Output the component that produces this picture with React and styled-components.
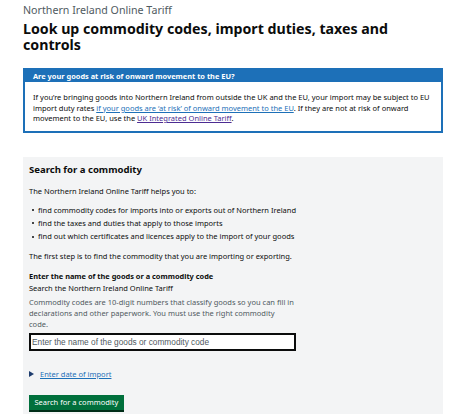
import React from 'react';
import styled, { createGlobalStyle } from 'styled-components';

const GlobalStyle = createGlobalStyle`
  html, body { margin: 0; padding: 0; background: #ffffff; }
  body {
    font-family: "Noto Sans", "Liberation Sans", Arial, sans-serif;
    color: #0b0c0c;
  }
  * { box-sizing: border-box; }
`;

const Page = styled.main`
  padding: 3px 31px 0 23px;
  display: flex;
  flex-direction: column;
`;

const Caption = styled.span`
  display: block;
  font-size: 10.66px;
  line-height: 14px;
  color: #505a5f;
`;

const Title = styled.h1`
  margin: 4px 0 0;
  max-width: 400px;
  font-size: 14.2px;
  line-height: 16px;
  font-weight: 700;
`;

const Banner = styled.section`
  margin-top: 15px;
  border: 2px solid #1d70b8;
  background: #ffffff;
`;

const BannerHeader = styled.div`
  background: #1d70b8;
  color: #ffffff;
  padding: 0 8px;
  font-size: 7.4px;
  line-height: 12px;
  font-weight: 700;
`;

const BannerBody = styled.p`
  margin: 0;
  padding: 10px 8px 7px;
  font-size: 7.5px;
  line-height: 10.6px;
`;

const Link = styled.a`
  color: ${p => (p.$visited ? '#4c2c92' : '#1d70b8')};
  text-decoration: underline;
  text-decoration-thickness: 0.6px;
  text-underline-offset: 1px;
`;

const Panel = styled.section`
  margin-top: 24px;
  background: #f3f4f5;
  padding: 7px 6px 4px;
  display: flex;
  flex-direction: column;
  align-items: flex-start;
`;

const PanelHeading = styled.h2`
  margin: 0;
  font-size: 9.55px;
  line-height: 12px;
  font-weight: 700;
`;

const Text = styled.p`
  margin: ${p => p.$top || 10}px 0 0;
  font-size: 7.5px;
  line-height: 10px;
`;

const List = styled.ul`
  margin: 9px 0 0;
  padding: 0 0 0 9px;
  list-style: none;
`;

const Item = styled.li`
  position: relative;
  font-size: 7.5px;
  line-height: 10px;
  margin-bottom: 3.2px;
  &:last-child { margin-bottom: 0; }
  &::before {
    content: '';
    position: absolute;
    left: -6px;
    top: 4.5px;
    width: 2px;
    height: 2px;
    border-radius: 50%;
    background: #0b0c0c;
  }
`;

const Label = styled.label`
  display: block;
  margin-top: 10px;
  font-size: 7.4px;
  line-height: 10px;
  font-weight: 700;
`;

const SubLabel = styled.div`
  margin-top: 2px;
  font-size: 7.5px;
  line-height: 10px;
`;

const Hint = styled.div`
  margin-top: 3.5px;
  max-width: 266px;
  font-size: 7.5px;
  line-height: 11px;
  color: #505a5f;
`;

const Input = styled.input`
  margin-top: 3.5px;
  width: 267px;
  height: 18px;
  border: 2px solid #0b0c0c;
  border-radius: 0;
  padding: 0 1px;
  background: #ffffff;
  font-family: "Liberation Sans", Arial, sans-serif;
  font-size: 8.3px;
  color: #0b0c0c;
  outline: none;
  &::placeholder { color: #505a5f; opacity: 1; }
`;

const Details = styled.div`
  margin-top: 18px;
  display: flex;
  align-items: center;
  gap: 6px;
  font-size: 7.5px;
  line-height: 10px;
`;

const Arrow = styled.span`
  width: 0;
  height: 0;
  border-style: solid;
  border-width: 3px 0 3px 5px;
  border-color: transparent transparent transparent #1d3c6e;
`;

const Button = styled.button`
  margin-top: 16px;
  height: 15px;
  padding: 0 5.5px;
  border: 0;
  border-radius: 0;
  background: #00703c;
  box-shadow: 0 2px 0 #002d18;
  color: #ffffff;
  font-family: "Noto Sans", "Liberation Sans", Arial, sans-serif;
  font-size: 7.5px;
  line-height: 15px;
  cursor: pointer;
`;

export default function App() {
  return (
    <>
      <GlobalStyle />
      <Page>
        <Caption>Northern Ireland Online Tariff</Caption>
        <Title>Look up commodity codes, import duties, taxes and controls</Title>

        <Banner>
          <BannerHeader>Are your goods at risk of onward movement to the EU?</BannerHeader>
          <BannerBody>
            If you’re bringing goods into Northern Ireland from outside the UK and the EU, your import may be subject to EU
            import duty rates <Link href="#">if your goods are ‘at risk’ of onward movement to the EU</Link>. If they are not at risk of onward
            movement to the EU, use the <Link href="#" $visited>UK Integrated Online Tariff</Link>.
          </BannerBody>
        </Banner>

        <Panel>
          <PanelHeading>Search for a commodity</PanelHeading>
          <Text $top={10}>The Northern Ireland Online Tariff helps you to:</Text>
          <List>
            <Item>find commodity codes for imports into or exports out of Northern Ireland</Item>
            <Item>find the taxes and duties that apply to those imports</Item>
            <Item>find out which certificates and licences apply to the import of your goods</Item>
          </List>
          <Text $top={10}>The first step is to find the commodity that you are importing or exporting.</Text>
          <Label htmlFor="q">Enter the name of the goods or a commodity code</Label>
          <SubLabel>Search the Northern Ireland Online Tariff</SubLabel>
          <Hint>
            Commodity codes are 10-digit numbers that classify goods so you can fill in declarations and other paperwork. You must use the right commodity code.
          </Hint>
          <Input id="q" type="text" placeholder="Enter the name of the goods or commodity code" />
          <Details>
            <Arrow />
            <Link href="#">Enter date of import</Link>
          </Details>
          <Button type="button">Search for a commodity</Button>
        </Panel>
      </Page>
    </>
  );
}
